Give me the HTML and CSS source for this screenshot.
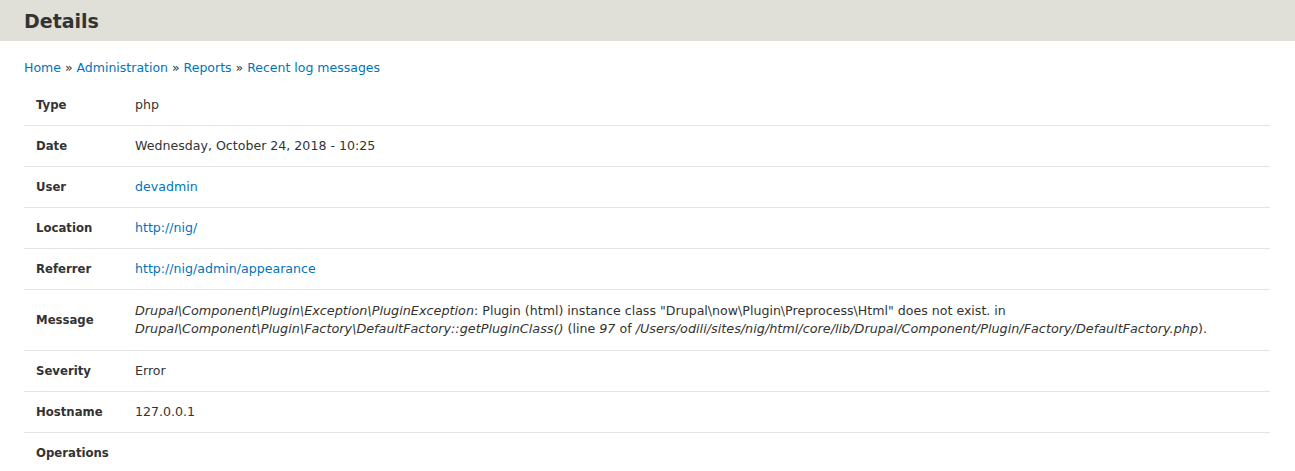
FILE: index.html
```html
<!DOCTYPE html>
<html lang="en">
<head>
<meta charset="utf-8">
<title>Details</title>
<link rel="stylesheet" href="styles.css">
</head>
<body>
<header class="page-header">
  <h1 class="page-title">Details</h1>
</header>
<main class="content">
  <nav class="breadcrumb">
    <a href="#">Home</a> » <a href="#">Administration</a> » <a href="#">Reports</a> » <a href="#">Recent log messages</a>
  </nav>
  <table class="details">
    <tbody>
      <tr><th>Type</th><td>php</td></tr>
      <tr><th>Date</th><td>Wednesday, October 24, 2018 - 10:25</td></tr>
      <tr><th>User</th><td><a href="#">devadmin</a></td></tr>
      <tr><th>Location</th><td><a href="#">http://nig/</a></td></tr>
      <tr><th>Referrer</th><td><a href="#">http://nig/admin/appearance</a></td></tr>
      <tr class="message-row"><th>Message</th><td><em>Drupal\Component\Plugin\Exception\PluginException</em>: Plugin (html) instance class "Drupal\now\Plugin\Preprocess\Html" does not exist. in<br><em>Drupal\Component\Plugin\Factory\DefaultFactory::getPluginClass()</em> (line <em>97</em> of <em>/Users/odili/sites/nig/html/core/lib/Drupal/Component/Plugin/Factory/DefaultFactory.php</em>).</td></tr>
      <tr><th>Severity</th><td>Error</td></tr>
      <tr><th>Hostname</th><td>127.0.0.1</td></tr>
      <tr><th>Operations</th><td></td></tr>
    </tbody>
  </table>
</main>
</body>
</html>
```
FILE: styles.css
```css
html, body {
  margin: 0;
  padding: 0;
  background: #fff;
}
body {
  font-family: "DejaVu Sans", "Lucida Grande", sans-serif;
  color: #333;
  font-size: 12.6px;
}
.page-header {
  background: #e0e0d8;
  height: 41px;
  padding: 0 24px;
  display: flex;
  align-items: center;
}
.page-title {
  margin: 0;
  font-size: 19px;
  font-weight: bold;
  color: #333;
}
.content {
  padding: 0 25px 0 24px;
}
.breadcrumb {
  font-size: 12.5px;
  line-height: 18px;
  padding-top: 18px;
  padding-bottom: 8px;
  color: #333;
}
a {
  color: #0074bd;
  text-decoration: none;
}
.details {
  width: 100%;
  border-collapse: collapse;
}
.details tr {
  border-bottom: 1px solid #e6e4df;
}
.details tr:last-child {
  border-bottom: none;
}
.details th,
.details td {
  padding: 11px 12px;
  line-height: 18px;
  text-align: left;
  vertical-align: middle;
  color: #333;
}
.details .message-row th,
.details .message-row td {
  padding: 12px 12px;
}
.details th {
  width: 75px;
  font-weight: bold;
  font-size: 11.7px;
}
.details td {
  font-weight: normal;
}
.details em {
  font-size: 12.8px;
}
```
